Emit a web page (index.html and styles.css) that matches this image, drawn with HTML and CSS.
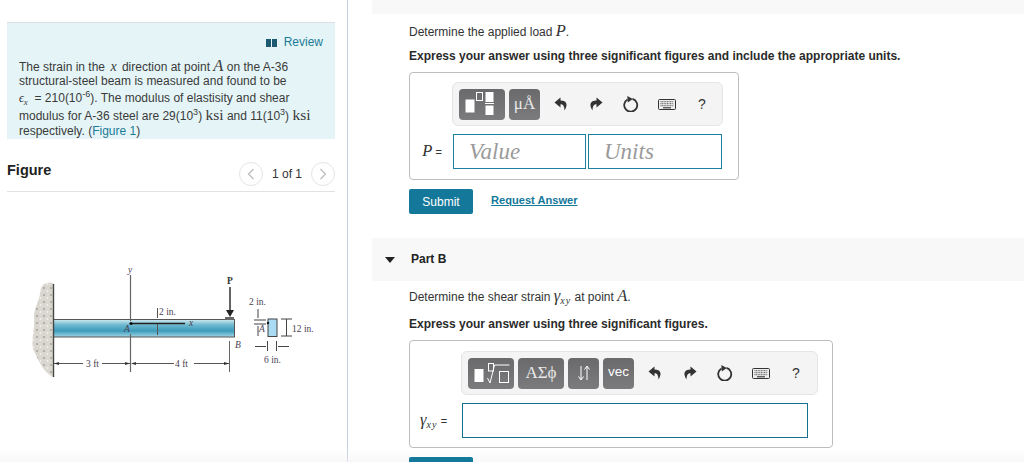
FILE: index.html
```html
<!DOCTYPE html>
<html lang="en">
<head>
<meta charset="utf-8">
<title>Part B</title>
<link rel="stylesheet" href="styles.css">
</head>
<body>
<svg class="defs" width="0" height="0" aria-hidden="true">
  <symbol id="undo" viewBox="0 0 14 14"><path d="M6.500 0.500 L0.500 5.500 L6.500 10.500 V7.300 C9 7.300 10.300 8.700 10.500 13.500 C14 8 13.200 3.500 6.500 3.500 Z"/></symbol>
  <symbol id="redo" viewBox="0 0 14 14"><path d="M7.500 0.500 L13.500 5.500 L7.500 10.500 V7.300 C5 7.300 3.700 8.700 3.500 13.500 C0 8 0.800 3.500 7.500 3.500 Z"/></symbol>
  <symbol id="reset" viewBox="0 0 16 16"><path d="M9.500 2.900 A6.500 6.500 0 1 1 4.500 3.500" fill="none" stroke="#333" stroke-width="1.800"/><path d="M4.300 0 L9.800 3 L4.800 6.600 Z" fill="#333"/></symbol>
  <symbol id="keys" viewBox="0 0 18 11"><rect x="0.500" y="0.500" width="17" height="10" rx="1" fill="#eee" stroke="#333"/><path d="M2.500 2.700h13M2.500 4.700h13M2.500 6.700h13" stroke="#555" stroke-dasharray="1 .6"/><path d="M5 8.800h8" stroke="#333" stroke-width="1.100"/></symbol>
</svg>
<div class="page">
  <aside class="side">
    <section class="intro">
      <a class="review"><svg class="book" viewBox="0 0 11 8" width="11" height="8"><path d="M0 0h5v8H0zM6 0h5v8H6z"/></svg>Review</a>
      <p class="l">The strain in the <i class="m mx">x</i> direction at point <i class="m big">A</i> on the A-36</p>
      <p class="l">structural-steel beam is measured and found to be</p>
      <p class="l tall"><i class="m">ϵ<sub>x</sub></i> &nbsp;= 210(10<sup>-6</sup>). The modulus of elastisity and shear</p>
      <p class="l tall2">modulus for A-36 steel are 29(10<sup>3</sup>) <span class="r">ksi</span> and 11(10<sup>3</sup>) <span class="r">ksi</span></p>
      <p class="l last">respectively. (<a class="lnk">Figure 1</a>)</p>
    </section>
    <header class="fighead">
      <h2>Figure</h2>
      <nav class="pager">
        <span class="circ"><svg viewBox="0 0 8 12" width="8" height="12"><path d="M6.500 1L1.500 6l5 5" fill="none" stroke="#bdbdbd" stroke-width="1.300"/></svg></span>
        <span class="of">1 of 1</span>
        <span class="circ"><svg viewBox="0 0 8 12" width="8" height="12"><path d="M1.500 1l5 5-5 5" fill="none" stroke="#bdbdbd" stroke-width="1.300"/></svg></span>
      </nav>
    </header>
    <figure class="fig">
      <svg viewBox="0 260 347 130" width="347" height="130">
        <defs>
          <linearGradient id="beam" x1="0" y1="0" x2="0" y2="1">
            <stop offset="0" stop-color="#d3eaf0"/><stop offset=".3" stop-color="#6fb9d0"/><stop offset=".65" stop-color="#3d9cbc"/><stop offset="1" stop-color="#a5d6e6"/>
          </linearGradient>
          <pattern id="speck" width="7" height="7" patternUnits="userSpaceOnUse">
            <rect width="7" height="7" fill="#d9d7cf"/>
            <circle cx="2" cy="2" r="1.100" fill="#a9a79f"/><circle cx="5.500" cy="5" r=".9" fill="#f2f1ec"/>
          </pattern>
          <filter id="soft"><feGaussianBlur stdDeviation=".35"/></filter>
        </defs>
        <g filter="url(#soft)">
          <path d="M53 284 C45 282 40 287 40 295 C38 305 34 310 34 318 C35 330 31 340 33 350 C38 360 42 372 53 378 Z" fill="url(#speck)"/>
          <rect x="53.500" y="320.500" width="181" height="17.500" fill="url(#beam)" stroke="#555"/>
          <path d="M53.500 285V378" stroke="#444" stroke-width="1.400"/>
          <path d="M130.500 276V322M130.500 335V373" stroke="#666" stroke-width="1.200"/>
          <path d="M131 324.500H185" stroke="#222" stroke-width="1.300"/>
          <circle cx="131" cy="324.500" r="1.600" fill="#111"/>
          <path d="M157.500 309V319M157.500 325V336" stroke="#555"/>
          <path d="M230 288V313" stroke="#333" stroke-width="1.500"/><path d="M226 311H234L230 318Z" fill="#222"/>
          <rect x="225" y="318" width="9" height="3" fill="#666"/>
          <path d="M229.500 342V373" stroke="#666"/>
          <path d="M54 364.500H83M102 364.500H130M132 364.500H174M194 364.500H229" stroke="#555"/>
          <path d="M54 364.500l5-1.500v3zM130 364.500l-5-1.500v3zM131 364.500l5-1.500v3zM229 364.500l-5-1.500v3z" fill="#333"/>
          <rect x="268" y="320" width="9" height="17.500" fill="#a9dcf2" stroke="#444"/>
          <circle cx="268" cy="324" r="1.200" fill="#111"/>
          <path d="M258 310V319M254 321H266M254 325H266M258 327V337" stroke="#444"/>
          <path d="M281 320H292M281 337H292M286.500 320V337" stroke="#444"/>
          <path d="M255 347.500H266M267.500 342V352M276.500 342V352M278 347.500H289" stroke="#444"/>
        </g>
        <g class="lab">
          <text x="128" y="274" class="it">y</text>
          <text x="189" y="327" class="it">x</text>
          <text x="124" y="333" class="it">A</text>
          <text x="235" y="349" class="it">B</text>
          <text x="227" y="285" class="bd">P</text>
          <text x="159" y="316">2 in.</text>
          <text x="249" y="306">2 in.</text>
          <text x="292" y="333">12 in.</text>
          <text x="264" y="364">6 in.</text>
          <text x="86" y="368">3 ft</text>
          <text x="175" y="368">4 ft</text>
          <text x="259" y="333" class="it">A</text>
        </g>
      </svg>
    </figure>
  </aside>
  <main class="main">
    <div class="band top"></div>
    <section class="part">
      <p class="q first">Determine the applied load <i class="m big">P</i>.</p>
      <p class="s">Express your answer using three significant figures and include the appropriate units.</p>
      <div class="box boxa">
        <div class="tools toolsa">
          <span class="btn w45"><svg viewBox="0 0 34 24" width="34" height="24"><path d="M.5 7.500h9v13h-9zM20.500 0h8v10h-8zM20.500 13.500h8V23h-8z" fill="#fff"/><path d="M20 11.500h9" stroke="#fff"/><rect x="11.500" y=".5" width="6" height="8" fill="none" stroke="#fff"/></svg></span>
          <span class="btn w31 sym">μÅ</span>
          <span class="acts">
            <svg class="ic"><use href="#undo"/></svg>
            <svg class="ic"><use href="#redo"/></svg>
            <svg class="ic ic3"><use href="#reset"/></svg>
            <svg class="kb"><use href="#keys"/></svg>
            <span class="help">?</span>
          </span>
        </div>
        <div class="row">
          <span class="lab1"><i class="m big">P</i> <span class="eq">=</span></span>
          <span class="inp val">Value</span>
          <span class="inp unit">Units</span>
        </div>
      </div>
      <div class="actions">
        <button class="submit">Submit</button>
        <a class="req">Request Answer</a>
      </div>
    </section>
    <div class="band partb"><span class="tri"></span><h3>Part B</h3></div>
    <section class="part">
      <p class="q q2">Determine the shear strain <i class="m big">γ<sub class="wsub">xy</sub></i> at point <i class="m big">A</i>.</p>
      <p class="s s2">Express your answer using three significant figures.</p>
      <div class="box boxb">
        <div class="tools toolsb">
          <span class="btn w45"><svg viewBox="0 0 40 24" width="40" height="24"><path d="M3.500 8h9v13h-9z" fill="#fff"/><rect x="17.500" y="2.500" width="5" height="7.500" fill="none" stroke="#fff"/><path d="M16.500 17l2.500 5 4.500-18h15" fill="none" stroke="#fff"/><rect x="28.500" y="10.500" width="9" height="11" fill="none" stroke="#fff"/></svg></span>
          <span class="btn w46 sym">ΑΣϕ</span>
          <span class="btn w31"><svg viewBox="0 0 14 16" width="14" height="16"><path d="M4 1v13M1.500 11.500L4 15l2.500-3.500M10 15V2M7.500 4.500L10 1l2.500 3.500" fill="none" stroke="#fff"/></svg></span>
          <span class="btn w31 vec">vec</span>
          <span class="acts actsb">
            <svg class="ic"><use href="#undo"/></svg>
            <svg class="ic"><use href="#redo"/></svg>
            <svg class="ic ic3"><use href="#reset"/></svg>
            <svg class="kb"><use href="#keys"/></svg>
            <span class="help">?</span>
          </span>
        </div>
        <div class="row">
          <span class="lab2"><i class="m big">γ<sub class="wsub">xy</sub></i> <span class="eq">=</span></span>
          <span class="inp wide"></span>
        </div>
      </div>
      <button class="submit next"></button>
    </section>
  </main>
</div>
<div class="fade"></div>
</body>
</html>
```
FILE: styles.css
```css
* { box-sizing: border-box; }
html, body { margin: 0; height: 462px; overflow: hidden; background: #fff; }
body { font: 12px/15px "Liberation Sans", Arial, sans-serif; color: #333; position: relative; }
p, h2, h3, figure { margin: 0; }
.defs { position: absolute; }
.page { display: flex; height: 462px; }

.side { width: 348px; flex: none; border-right: 1px solid #c3cfe2; padding: 22px 12px 0 7px; }
.intro { height: 117px; background: #e5f5f7; border-top: 1px solid #dcdfe1; padding: 12px 12px 0 12px; }
.review { display: flex; justify-content: flex-end; align-items: center; gap: 7px; color: #1c7a98; height: 15px; margin-bottom: 9px; }
.book { fill: #1d5a72; }
.l { height: 14.500px; line-height: 14.500px; white-space: nowrap; color: #3a3a3a; }
.tall { margin-top: 3px; }
.tall2 { margin-top: 2.500px; }
.last { margin-top: 1px; }
.lnk { color: #1c7a98; }
.m { font-family: "Liberation Serif", serif; font-style: italic; }
.mx { font-size: 14px; padding: 0 2px; }
.big { font-size: 16.500px; }
.r { font-family: "Liberation Serif", serif; font-size: 15.500px; }
sup { font-size: 9px; line-height: 0; vertical-align: 5px; }
sub { font-size: 9px; line-height: 0; vertical-align: -3px; }
.wsub { font-size: 10px; letter-spacing: 1px; }
.eq { font-size: 11px; }

.fighead { display: flex; justify-content: space-between; align-items: flex-end; height: 53px; padding-bottom: 5px; border-bottom: 1px solid #e2e2e2; }
.fighead h2 { font-size: 14.500px; color: #222; font-weight: 700; margin-bottom: 8px; }
.pager { display: flex; align-items: center; gap: 9px; }
.circ { width: 24px; height: 24px; border: 1px solid #e4e4e4; border-radius: 50%; display: flex; align-items: center; justify-content: center; }
.of { color: #333; }
.fig { margin: 67px 0 0 -7px; width: 347px; }
.fig svg { display: block; }
.lab text { font: 9.500px "Liberation Serif", serif; fill: #4a3f52; }
.lab .it { font-style: italic; }
.lab .bd { font-weight: 700; fill: #333; }

.main { flex: 1; padding-left: 24px; min-width: 0; }
.band { background: #f8f8f8; }
.top { height: 14px; }
.part { padding-left: 37px; }
.q { color: #333; height: 17px; line-height: 17px; margin-top: 8px; }
.q.first { margin-top: 8px; }
.q.q2 { margin-top: 6px; }
.s { color: #2b2b2b; font-weight: 700; margin-top: 10px; height: 15px; }
.s.s2 { margin-top: 13px; }
.box { border: 1px solid #bdbdbd; border-radius: 4px; margin-top: 8px; padding-top: 9px; height: 108px; }
.boxa { width: 330px; }
.boxb { width: 424px; margin-top: 8px; padding-top: 10px; }
.tools { display: flex; align-items: center; gap: 4px; height: 44px; background: #f4f4f4; border: 1px solid #e5e5e5; border-radius: 6px; padding-left: 6px; }
.toolsa { margin-left: 42px; width: 271px; }
.toolsb { margin-left: 51px; width: 357px; }
.btn { height: 31px; border-radius: 4px; background: linear-gradient(#6a6a6c, #7b7b7d); color: #fff; display: flex; align-items: center; justify-content: center; flex: none; }
.w45 { width: 46px; }
.w46 { width: 46px; }
.w31 { width: 31px; }
.sym { font: 17px "Liberation Serif", serif; color: #e9e9e9; }
.vec { font-size: 13.500px; padding-bottom: 3px; }
.acts { display: flex; align-items: center; margin-left: 10px; gap: 21px; color: #333; }
.ic { width: 14px; height: 14px; fill: #333; }
.ic3 { width: 16px; height: 16px; margin-left: -1px; }
.kb { width: 18px; height: 11px; margin-left: -2px; }
.help { font-size: 14px; margin-left: 1px; }
.row { display: flex; align-items: center; margin-top: 8px; }
.lab1 { width: 43px; text-align: right; padding-right: 11px; white-space: nowrap; }
.lab2 { width: 52px; padding-left: 10px; white-space: nowrap; }
.inp { height: 35px; border: 1px solid #1f7f9f; display: block; font: italic 23px/33px "Liberation Serif", serif; color: #9a9a9a; padding-left: 15px; }
.val { width: 133px; margin-right: 2px; }
.unit { width: 134px; }
.wide { width: 346px; border-color: #14708f; }
.actions { display: flex; align-items: center; gap: 18px; margin-top: 9px; }
.submit { width: 64px; height: 25px; border: 0; border-radius: 2px; background: #13789a; color: #fff; font: 12px "Liberation Sans", Arial, sans-serif; padding: 0; position: relative; z-index: 2; }
.next { display: block; margin-top: 9px; }
.req { color: #13789a; font-weight: 700; font-size: 11.100px; text-decoration: underline; margin-bottom: 2px; }
.partb { height: 43px; margin-top: 24px; display: flex; align-items: center; padding-left: 13px; }
.tri { width: 0; height: 0; border: 5px solid transparent; border-top: 6px solid #222; border-bottom: 0; }
.partb h3 { margin: 0 0 0 16px; font-size: 12px; font-weight: 700; color: #222; }
.fade { position: absolute; left: 0; right: 0; bottom: 0; height: 14px; background: linear-gradient(rgba(240,240,240,0), rgba(240,240,240,.5)); pointer-events: none; }
```
